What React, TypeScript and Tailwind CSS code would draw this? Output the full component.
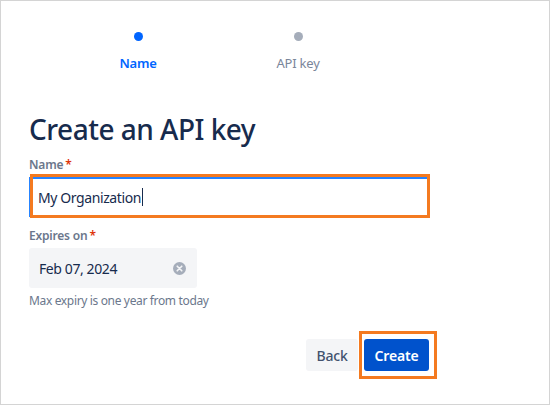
import React from "react";

export default function App() {
  const font = { fontFamily: '"Noto Sans", "Open Sans", sans-serif' };
  return (
    <div className="w-[550px] h-[405px] bg-white border border-[#d4d4d4] relative overflow-hidden" style={font}>
      <div className="flex pl-[57px] pt-[31px]">
        <div className="w-[160px] flex flex-col items-center">
          <div className="w-[9px] h-[9px] rounded-full bg-[#0065ff]" />
          <div className="mt-[13px] text-[13px] leading-[18px] font-semibold text-[#0065ff] tracking-[-0.2px]">Name</div>
        </div>
        <div className="w-[160px] flex flex-col items-center">
          <div className="w-[9px] h-[9px] rounded-full bg-[#a5adba]" />
          <div className="mt-[13px] text-[13px] leading-[18px] text-[#7a869a] tracking-[-0.2px]">API key</div>
        </div>
      </div>
      <div className="pl-[28px] pt-[41px]">
        <h1 className="text-[28px] leading-[32px] text-[#172b4d] font-medium tracking-[-0.5px]">Create an API key</h1>
        <div className="mt-[12px] text-[12px] leading-[16px] font-semibold text-[#6b778c] tracking-[-0.2px]">
          Name<span className="text-[#de350b] ml-[2px]">*</span>
        </div>
        <div className="relative mt-[4px] w-[400px] h-[40px] border-y-2 border-l-2 border-[#2684ff] flex items-center pl-[7px]">
          <span className="text-[14px] text-[#172b4d] tracking-[-0.4px]">My Organization</span>
          <span className="w-[1px] h-[18px] bg-[#172b4d] ml-[1px]" />
          <div className="absolute left-[-1px] top-[-5px] w-[400px] h-[44px] border-[3px] border-[#f47a20]" />
        </div>
        <div className="mt-[11px] text-[12px] leading-[16px] font-semibold text-[#6b778c] tracking-[-0.2px]">
          Expires on<span className="text-[#de350b] ml-[2px]">*</span>
        </div>
        <div className="mt-[4px] w-[168px] h-[40px] rounded-[3px] bg-[#f4f5f7] flex items-center justify-between pl-[10px] pr-[11px]">
          <span className="text-[14px] text-[#172b4d] tracking-[-0.4px]">Feb 07, 2024</span>
          <svg width="13" height="13" viewBox="0 0 16 16">
            <circle cx="8" cy="8" r="8" fill="#a5adba" />
            <path d="M5.2 5.2 L10.8 10.8 M10.8 5.2 L5.2 10.8" stroke="#f4f5f7" strokeWidth="2" strokeLinecap="round" />
          </svg>
        </div>
        <div className="mt-[5px] text-[12px] leading-[16px] text-[#6b778c] tracking-[-0.35px]">Max expiry is one year from today</div>
        <div className="mt-[30px] w-[400px] flex justify-end gap-[6px]">
          <button className="w-[52px] h-[32px] rounded-[3px] bg-[#f4f5f7] text-[14px] font-medium text-[#42526e] tracking-[-0.2px]">Back</button>
          <div className="relative">
            <button className="w-[65px] h-[32px] rounded-[3px] bg-[#0052cc] text-[14px] font-semibold text-white tracking-[-0.2px]">Create</button>
            <div className="absolute left-[-5px] top-[-8px] w-[78px] h-[48px] border-[3px] border-[#f47a20]" />
          </div>
        </div>
      </div>
    </div>
  );
}
